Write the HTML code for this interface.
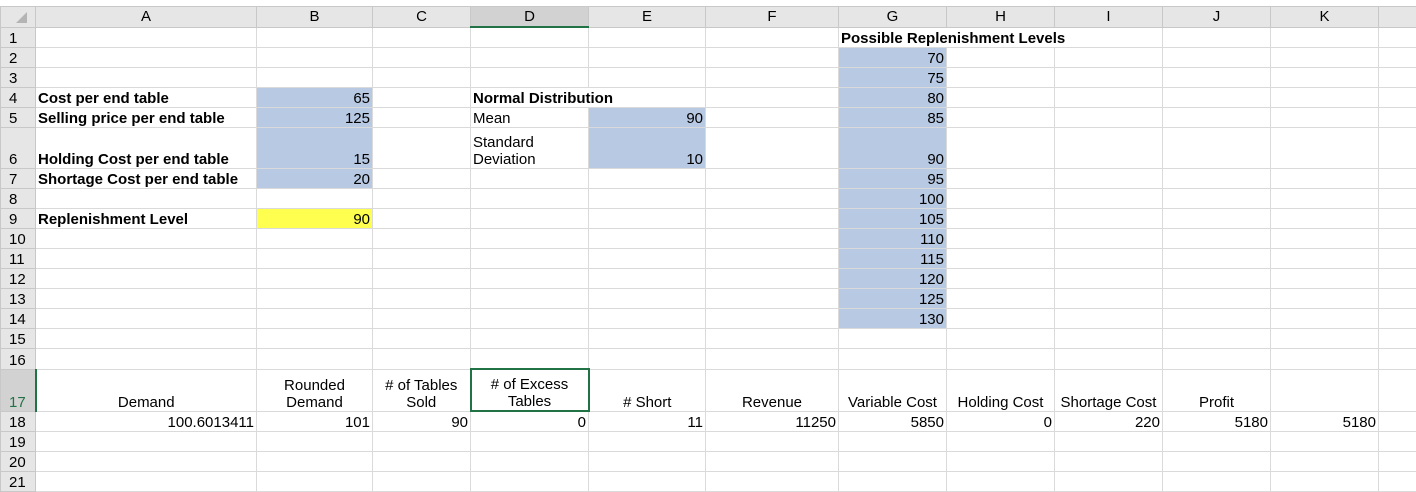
<!DOCTYPE html>
<html><head><style>
body{margin:0;background:#fff;width:1416px;height:488px;overflow:hidden;font-family:"Liberation Sans",Arial,sans-serif;font-size:15px;color:#000}
table{position:absolute;top:6px;left:0;width:1416px;border-collapse:collapse;table-layout:fixed}
td{border:1px solid #dadada;padding:0 2px;height:19px;line-height:17px;white-space:nowrap;overflow:visible;vertical-align:bottom}
tr.h td{background:#e6e6e6;text-align:center;border-color:#c8c8c8;vertical-align:middle;height:19px}
td.rh{background:#e6e6e6;text-align:left;padding-left:8px;border-color:#c8c8c8}
.r{text-align:right}.c{text-align:center}.b{font-weight:bold}
.bl{background:#b8c9e3}.y{background:#ffff4f}
.tall td{height:40px}
</style></head><body>
<table>
<colgroup><col style="width:35px"><col style="width:221px"><col style="width:116px"><col style="width:98px"><col style="width:118px"><col style="width:117px"><col style="width:133px"><col style="width:108px"><col style="width:108px"><col style="width:108px"><col style="width:108px"><col style="width:108px"><col style="width:38px"></colgroup>
<tr class="h"><td style="padding:0;line-height:0"><svg width="30" height="14" style="display:block"><polygon points="26,2 26,13 15,13" fill="#b4b4b4"/></svg></td><td>A</td><td>B</td><td>C</td><td style="background:#d2d2d2;border-bottom:2px solid #217346">D</td><td>E</td><td>F</td><td>G</td><td>H</td><td>I</td><td>J</td><td>K</td><td></td></tr>
<tr><td class="rh">1</td><td></td><td></td><td></td><td></td><td></td><td></td><td class="b" colspan="3" style="border-right-color:#dadada">Possible Replenishment Levels</td><td></td><td></td><td></td></tr>
<tr><td class="rh">2</td><td></td><td></td><td></td><td></td><td></td><td></td><td class="r bl">70</td><td></td><td></td><td></td><td></td><td></td></tr>
<tr><td class="rh">3</td><td></td><td></td><td></td><td></td><td></td><td></td><td class="r bl">75</td><td></td><td></td><td></td><td></td><td></td></tr>
<tr><td class="rh">4</td><td class="b">Cost per end table</td><td class="r bl">65</td><td></td><td class="b" colspan="2">Normal Distribution</td><td></td><td class="r bl">80</td><td></td><td></td><td></td><td></td><td></td></tr>
<tr><td class="rh">5</td><td class="b">Selling price per end table</td><td class="r bl">125</td><td></td><td>Mean</td><td class="r bl">90</td><td></td><td class="r bl">85</td><td></td><td></td><td></td><td></td><td></td></tr>
<tr class="tall"><td class="rh">6</td><td class="b">Holding Cost per end table</td><td class="r bl">15</td><td></td><td>Standard<br>Deviation</td><td class="r bl">10</td><td></td><td class="r bl">90</td><td></td><td></td><td></td><td></td><td></td></tr>
<tr><td class="rh">7</td><td class="b">Shortage Cost per end table</td><td class="r bl">20</td><td></td><td></td><td></td><td></td><td class="r bl">95</td><td></td><td></td><td></td><td></td><td></td></tr>
<tr><td class="rh">8</td><td></td><td></td><td></td><td></td><td></td><td></td><td class="r bl">100</td><td></td><td></td><td></td><td></td><td></td></tr>
<tr><td class="rh">9</td><td class="b">Replenishment Level</td><td class="r y">90</td><td></td><td></td><td></td><td></td><td class="r bl">105</td><td></td><td></td><td></td><td></td><td></td></tr>
<tr><td class="rh">10</td><td></td><td></td><td></td><td></td><td></td><td></td><td class="r bl">110</td><td></td><td></td><td></td><td></td><td></td></tr>
<tr><td class="rh">11</td><td></td><td></td><td></td><td></td><td></td><td></td><td class="r bl">115</td><td></td><td></td><td></td><td></td><td></td></tr>
<tr><td class="rh">12</td><td></td><td></td><td></td><td></td><td></td><td></td><td class="r bl">120</td><td></td><td></td><td></td><td></td><td></td></tr>
<tr><td class="rh">13</td><td></td><td></td><td></td><td></td><td></td><td></td><td class="r bl">125</td><td></td><td></td><td></td><td></td><td></td></tr>
<tr><td class="rh">14</td><td></td><td></td><td></td><td></td><td></td><td></td><td class="r bl">130</td><td></td><td></td><td></td><td></td><td></td></tr>
<tr><td class="rh">15</td><td></td><td></td><td></td><td></td><td></td><td></td><td></td><td></td><td></td><td></td><td></td><td></td></tr>
<tr><td class="rh">16</td><td></td><td></td><td></td><td></td><td></td><td></td><td></td><td></td><td></td><td></td><td></td><td></td></tr>
<tr class="tall"><td class="rh" style="background:#d2d2d2;color:#217346;border-right:2px solid #217346">17</td><td class="c">Demand</td><td class="c">Rounded<br>Demand</td><td class="c"># of Tables<br>Sold</td><td class="c" style="border:2px solid #217346"># of Excess<br>Tables</td><td class="c"># Short</td><td class="c">Revenue</td><td class="c">Variable Cost</td><td class="c">Holding Cost</td><td class="c">Shortage Cost</td><td class="c">Profit</td><td></td><td></td></tr>
<tr><td class="rh">18</td><td class="r">100.6013411</td><td class="r">101</td><td class="r">90</td><td class="r">0</td><td class="r">11</td><td class="r">11250</td><td class="r">5850</td><td class="r">0</td><td class="r">220</td><td class="r">5180</td><td class="r">5180</td><td></td></tr>
<tr><td class="rh">19</td><td></td><td></td><td></td><td></td><td></td><td></td><td></td><td></td><td></td><td></td><td></td><td></td></tr>
<tr><td class="rh">20</td><td></td><td></td><td></td><td></td><td></td><td></td><td></td><td></td><td></td><td></td><td></td><td></td></tr>
<tr><td class="rh">21</td><td></td><td></td><td></td><td></td><td></td><td></td><td></td><td></td><td></td><td></td><td></td><td></td></tr>
</table>
</body></html>
